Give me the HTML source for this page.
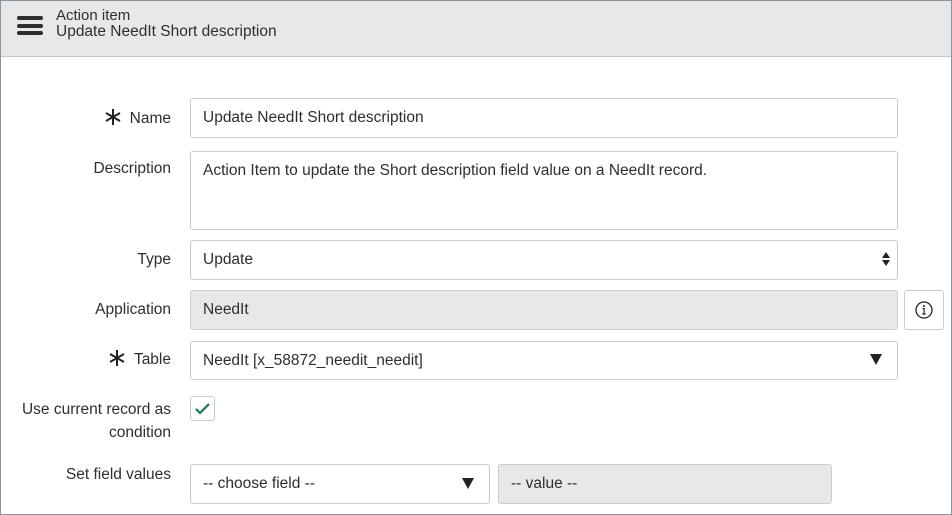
<!DOCTYPE html>
<html><head><meta charset="utf-8"><style>
*{box-sizing:border-box;margin:0;padding:0}
body{width:952px;height:515px;background:#fff;font-family:"Liberation Sans",sans-serif;color:#2e2e2e;position:relative;overflow:hidden}
.frame{position:absolute;left:0;top:0;width:952px;height:515px;border:1px solid #8a949c}
.hdr{position:absolute;left:0;top:0;width:952px;height:57px;background:#e6e8ea;border-bottom:1px solid #c4c8cc}
.bar{position:absolute;left:17px;width:26px;height:4px;background:#2e2e2e;border-radius:2px}
.t1{position:absolute;left:56px;top:7px;font-size:15px}
.t2{position:absolute;left:56px;top:23px;font-size:15.5px}
.lbl{position:absolute;right:781px;font-size:15.5px;text-align:right;line-height:23px}
.inp{position:absolute;border:1px solid #c9cccf;border-radius:3px;background:#fff;font-size:15.5px;padding-left:12px;line-height:38px}
.gray{background:#e6e8ea}
.star{display:inline-block;vertical-align:-3px;margin-right:8px}
.tri{position:absolute;width:0;height:0;border-left:6px solid transparent;border-right:6px solid transparent;border-top:11px solid #222}
</style></head><body>
<div class="hdr">
<div class="bar" style="top:16px"></div><div class="bar" style="top:23.5px"></div><div class="bar" style="top:31px"></div>
<div class="t1">Action item</div><div class="t2">Update NeedIt Short description</div>
</div>
<div class="frame"></div>
<svg width="0" height="0" style="position:absolute"><defs><g id="st"><path d="M9 1v16M2 5l14 8M16 5L2 13" stroke="#222" stroke-width="2" fill="none"/></g></defs></svg>

<div class="lbl" style="top:107px"><svg class="star" width="18" height="18"><use href="#st"/></svg>Name</div>
<div class="inp" style="left:190px;top:98px;width:708px;height:40px">Update NeedIt Short description</div>

<div class="lbl" style="top:157px">Description</div>
<div class="inp" style="left:190px;top:151px;width:708px;height:79px;line-height:37px">Action Item to update the Short description field value on a NeedIt record.</div>

<div class="lbl" style="top:248px">Type</div>
<div class="inp" style="left:190px;top:240px;width:708px;height:40px">Update</div>
<div style="position:absolute;left:882px;top:252px;width:0;height:0;border-left:4px solid transparent;border-right:4px solid transparent;border-bottom:6px solid #222"></div>
<div style="position:absolute;left:882px;top:260px;width:0;height:0;border-left:4px solid transparent;border-right:4px solid transparent;border-top:6px solid #222"></div>

<div class="lbl" style="top:298px">Application</div>
<div class="inp gray" style="left:190px;top:290px;width:708px;height:40px">NeedIt</div>
<div class="inp" style="left:904px;top:290px;width:40px;height:40px;padding:0">
<svg width="38" height="38" viewBox="0 0 38 38"><circle cx="19" cy="19" r="8" fill="none" stroke="#222" stroke-width="1.3"/><circle cx="19" cy="15" r="1" fill="#222"/><path d="M17.5 17.5h1.6v5.5M17.3 23h3.5" fill="none" stroke="#222" stroke-width="1.2"/></svg></div>

<div class="lbl" style="top:348px"><svg class="star" width="18" height="18"><use href="#st"/></svg>Table</div>
<div class="inp" style="left:190px;top:341px;width:708px;height:39px">NeedIt [x_58872_needit_needit]</div>
<div class="tri" style="left:870px;top:354px"></div>

<div class="lbl" style="top:398px">Use current record as<br>condition</div>
<div style="position:absolute;left:190px;top:396px;width:25px;height:25px;border:1px solid #c9cccf;border-radius:3px">
<svg width="23" height="23" viewBox="0 0 23 23"><path d="M5 12l4 4 9-9" fill="none" stroke="#2f7d6a" stroke-width="2.3"/></svg></div>

<div class="lbl" style="top:463px">Set field values</div>
<div class="inp" style="left:190px;top:464px;width:300px;height:40px">-- choose field --</div>
<div class="tri" style="left:462px;top:478px"></div>
<div class="inp gray" style="left:498px;top:464px;width:334px;height:40px">-- value --</div>
</body></html>
